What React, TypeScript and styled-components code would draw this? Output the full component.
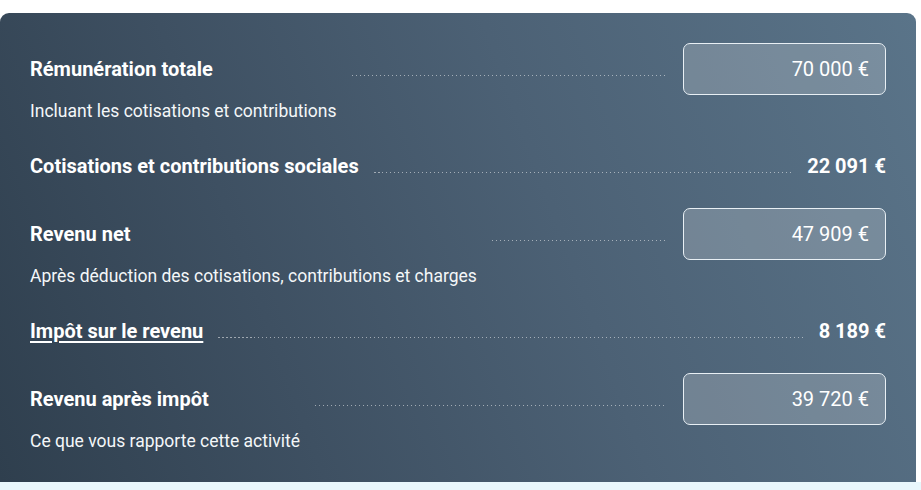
import React from "react";
import styled, { createGlobalStyle } from "styled-components";

const Global = createGlobalStyle`
  html, body { margin: 0; padding: 0; background: #ffffff; }
  body { font-family: Roboto, "Liberation Sans", sans-serif; }
  * { box-sizing: border-box; }
`;

const Page = styled.div`
  width: 921px;
  height: 490px;
  padding-top: 13px;
  display: flex;
  flex-direction: column;
  overflow: hidden;
`;

const Panel = styled.section`
  width: 916px;
  padding: 30px 30px 28px 30px;
  border-radius: 9px 9px 0 0;
  background: linear-gradient(70deg, #2f3f4e 0%, #3e5062 30%, #4c6175 60%, #5a7489 100%);
  display: flex;
  flex-direction: column;
  gap: 30px;
  color: #ffffff;
`;

const Footer = styled.div`
  flex: 1;
  background: #e9f7fc;
`;

const Row = styled.div`
  display: grid;
  grid-template-columns: auto 1fr auto;
  column-gap: 15px;
  align-items: center;
`;

const Label = styled.div<{ $link?: boolean }>`
  font-size: 20px;
  font-weight: 700;
  line-height: 24px;
  color: #ffffff;
  text-decoration: ${(p) => (p.$link ? "underline" : "none")};
  text-underline-offset: 3px;
  text-decoration-thickness: 1.5px;
`;

const Leader = styled.div`
  align-self: center;
  height: 13px;
  background-image: repeating-linear-gradient(
    to right,
    rgba(255, 255, 255, 0.5) 0 1.5px,
    transparent 1.5px 4px
  );
  background-size: 100% 1px;
  background-position: left bottom;
  background-repeat: no-repeat;
`;

const Description = styled.div`
  grid-column: 1;
  margin-top: 3px;
  font-size: 17.5px;
  line-height: 26px;
  color: #f4f7f9;
`;

const ValueBox = styled.div`
  width: 203px;
  height: 52px;
  margin-left: 1px;
  border: 1px solid #e8eff4;
  border-radius: 7px;
  background: rgba(255, 255, 255, 0.2);
  display: flex;
  align-items: center;
  justify-content: flex-end;
  padding-right: 16px;
  font-size: 20px;
  color: #ffffff;
`;

const Value = styled.div`
  font-size: 20px;
  font-weight: 700;
  line-height: 24px;
  text-align: right;
`;

type Item = {
  label: string;
  value: string;
  description?: string;
  input?: boolean;
  link?: boolean;
};

const items: Item[] = [
  {
    label: "Rémunération totale",
    value: "70\u00a0000\u00a0€",
    description: "Incluant les cotisations et contributions",
    input: true,
  },
  { label: "Cotisations et contributions sociales", value: "22\u00a0091\u00a0€" },
  {
    label: "Revenu net",
    value: "47\u00a0909\u00a0€",
    description: "Après déduction des cotisations, contributions et charges",
    input: true,
  },
  { label: "Impôt sur le revenu", value: "8\u00a0189\u00a0€", link: true },
  {
    label: "Revenu après impôt",
    value: "39\u00a0720\u00a0€",
    description: "Ce que vous rapporte cette activité",
    input: true,
  },
];

export default function App() {
  return (
    <>
      <Global />
      <Page>
        <Panel>
          {items.map((it) => (
            <Row key={it.label}>
              <Label $link={it.link}>{it.label}</Label>
              <Leader />
              {it.input ? <ValueBox>{it.value}</ValueBox> : <Value>{it.value}</Value>}
              {it.description && <Description>{it.description}</Description>}
            </Row>
          ))}
        </Panel>
        <Footer />
      </Page>
    </>
  );
}
